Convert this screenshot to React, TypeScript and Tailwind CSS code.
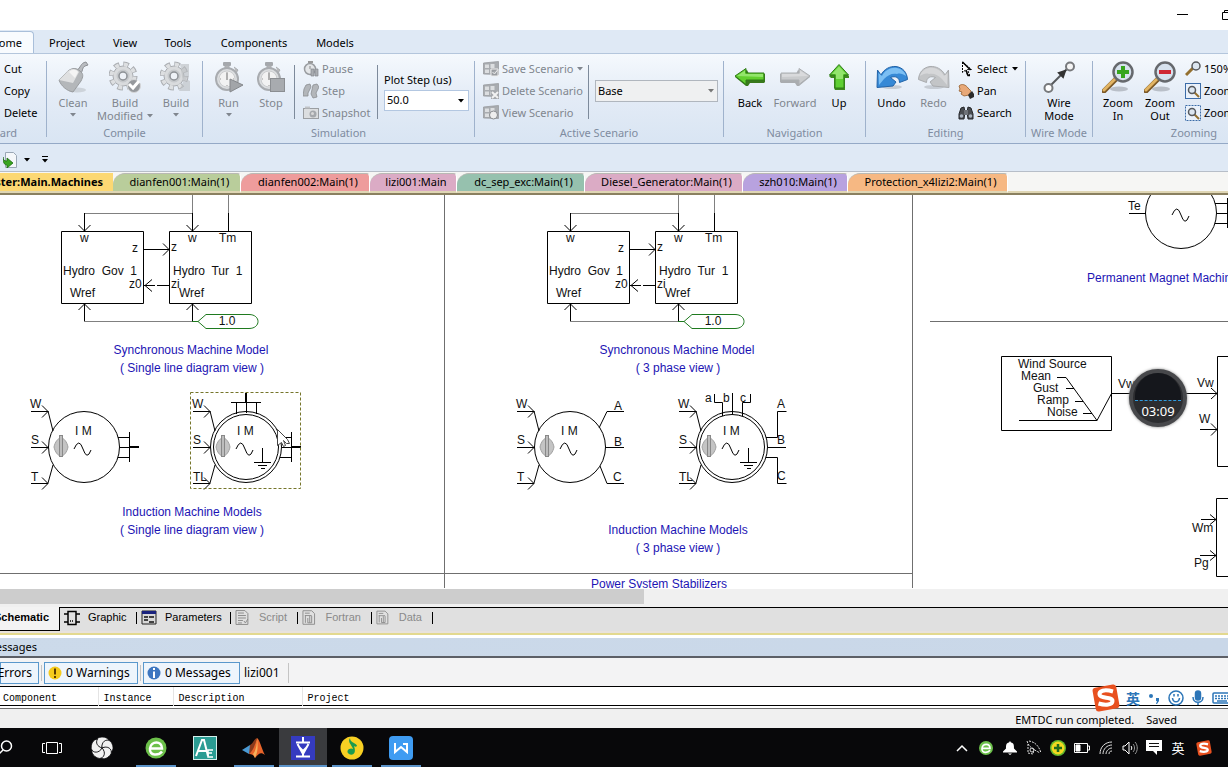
import { ReactNode, useState } from "react";

interface DocTab {
  label: string;
  className: string;
}

const docTabs: DocTab[] = [
  { label: "dianfen001:Main(1)", className: "w-[128px] bg-[#b9cd9b]" },
  { label: "dianfen002:Main(1)", className: "w-[129px] bg-[#ee9c9c]" },
  { label: "lizi001:Main", className: "w-[87px] bg-[#dbabc5]" },
  { label: "dc_sep_exc:Main(1)", className: "w-[128px] bg-[#96c1ae]" },
  { label: "Diesel_Generator:Main(1)", className: "w-[158px] bg-[#dbabc5]" },
  { label: "szh010:Main(1)", className: "w-[105px] bg-[#b8a2df]" },
  { label: "Protection_x4lizi2:Main(1)", className: "w-[160px] bg-[#f6b883]" },
];

/* ---------- ribbon building blocks ---------- */

function Caret({ className = "" }: { className?: string }) {
  return (
    <svg width="6" height="4" viewBox="0 0 6 4" className={className} fill="currentColor">
      <path d="M0 0h6L3 3.5z" />
    </svg>
  );
}

function Group({ title, className, children }: { title: string; className: string; children: ReactNode }) {
  return (
    <section className={`flex shrink-0 flex-col ${className}`}>
      <div className="flex h-[71px] pt-1">{children}</div>
      <div className="text-center leading-4 whitespace-nowrap text-[#7f8ca0]">{title}</div>
    </section>
  );
}

function Divider() {
  return <div className="mt-[7px] h-[76px] w-px shrink-0 bg-[#9fb2cc]" />;
}

function InnerDivider() {
  return <div className="mt-[7px] h-[54px] w-px shrink-0 bg-[#7d8a9b]" />;
}

interface BigButtonProps {
  icon: ReactNode;
  lines: string[];
  caret?: "below" | "inline";
  disabled?: boolean;
  className: string;
}

function BigButton({ icon, lines, caret, disabled, className }: BigButtonProps) {
  return (
    <button
      type="button"
      disabled={disabled}
      className={`flex shrink-0 flex-col items-center pt-[3px] whitespace-nowrap leading-[13px] ${disabled ? "text-[#80868e]" : "text-black"} ${className}`}
    >
      <span className="mb-[3px] flex h-8 items-center">{icon}</span>
      {lines.map((line, i) => (
        <span key={line} className="flex items-center gap-1">
          {line}
          {caret === "inline" && i === lines.length - 1 && <Caret />}
        </span>
      ))}
      {caret === "below" && <Caret className="mt-1" />}
    </button>
  );
}

function SmallButton({ icon, label, caret, disabled }: { icon: ReactNode; label: string; caret?: boolean; disabled?: boolean }) {
  return (
    <button
      type="button"
      disabled={disabled}
      className={`flex h-[22px] shrink-0 items-center gap-[3px] whitespace-nowrap ${disabled ? "text-[#80868e]" : "text-black"}`}
    >
      {icon}
      {label}
      {caret && <Caret className="ml-px" />}
    </button>
  );
}

/* ---------- ribbon icons ---------- */

function CleanIcon() {
  return (
    <svg width="32" height="32" viewBox="0 0 32 32">
      <ellipse cx="20" cy="29" rx="9" ry="2.500" fill="#cdd3da" />
      <path d="M20 9c4-2 3-7 9-8l2 3-3 1c-3 1-2 5-4 7z" fill="#b9bcc0" stroke="#8d9095" />
      <path d="M9 12c4-5 10-6 14-2 4 3 3 6 1 10l-8 11C10 30 4 25 2 19z" fill="#b4b7ba" stroke="#999c9f" />
      <path d="M9 12c4-5 10-5 13-1l-6 11L2 19z" fill="#dfe0e1" />
      <path d="M12 11c3-3 7-3 9 0l-3 6z" fill="#f4f4f4" />
    </svg>
  );
}

function GearIcon({ check }: { check?: boolean }) {
  return (
    <svg width="32" height="32" viewBox="0 0 32 32">
      <circle cx="14" cy="15" r="11.500" fill="none" stroke="#a9acb0" strokeWidth="6" strokeDasharray="5.200 3.830" />
      <circle cx="14" cy="15" r="10" fill="#d9dbdd" stroke="#a9acb0" />
      <circle cx="14" cy="15" r="11.500" fill="none" stroke="#dddfe1" strokeWidth="4" strokeDasharray="3.800 5.230" strokeDashoffset="-0.700" />
      <circle cx="14" cy="15" r="6.500" fill="#c6c9cc" />
      <circle cx="14" cy="15" r="4" fill="#eef2f7" stroke="#8d9196" strokeWidth="1.500" />
      {check ? (
        <g>
          <circle cx="25" cy="25" r="6.500" fill="#96999d" stroke="#d5d7d9" />
          <path d="M20 23l4 4 6-7" fill="none" stroke="#fff" strokeWidth="3" />
        </g>
      ) : (
        <path d="M20 3h9v12l-3 3 4 2v10H19l4-9z" fill="#b9bcc0" opacity=".6" />
      )}
    </svg>
  );
}

function StopwatchIcon({ mode }: { mode: "run" | "stop" }) {
  return (
    <svg width="30" height="32" viewBox="0 0 30 32">
      <rect x="9" y="1" width="8" height="4" rx="1" fill="#a5a8ac" />
      <path d="M11 5h4v3h-4zM20 6l4 3-2 3" fill="#bbb" stroke="#a9acb0" />
      <circle cx="13" cy="18" r="11" fill="#dcdee0" stroke="#a9acb0" strokeWidth="2" />
      <circle cx="13" cy="18" r="8" fill="#f2f2f2" stroke="#cbcdcf" />
      <path d="M13 12v7" stroke="#999" strokeWidth="1.500" />
      <path d="M13 11v1M13 24v1M6 18h1M19 18h1" stroke="#999" />
      {mode === "run" ? (
        <path d="M16 18l13 6-13 7z" fill="#a2a5a9" stroke="#85888c" />
      ) : (
        <rect x="14.500" y="17.500" width="14" height="13" fill="#a8abaf" stroke="#8b8e92" />
      )}
    </svg>
  );
}

function PauseIcon() {
  return (
    <svg width="16" height="16" viewBox="0 0 16 16">
      <rect x="5" y="0" width="5" height="2" fill="#999" />
      <circle cx="7" cy="8" r="5.500" fill="#e4e6e8" stroke="#9a9da1" strokeWidth="1.500" />
      <path d="M7 5v3" stroke="#888" />
      <path d="M8 8h3v7H8zM12 8h3v7h-3z" fill="#aaadb1" stroke="#85888c" strokeWidth=".7" />
    </svg>
  );
}

function StepIcon() {
  return (
    <svg width="16" height="16" viewBox="0 0 16 16" fill="#b3b6ba" stroke="#8a8d91" strokeWidth=".8">
      <path d="M3 2l4-1 1 3-3 6v3H0l1-7z" />
      <path d="M10 2l4-1 2 3-3 6 1 4-4 1-2-4z" />
    </svg>
  );
}

function SnapshotIcon() {
  return (
    <svg width="16" height="16" viewBox="0 0 16 16">
      <rect x=".5" y="3.500" width="15" height="10" fill="#dcdee0" stroke="#9b9ea2" />
      <path d="M2 1.500h5v2H2z" fill="#c0c3c6" />
      <circle cx="10" cy="9" r="3.500" fill="#a5a8ac" />
      <circle cx="9.500" cy="8.500" r="1.500" fill="#d8d8d8" />
    </svg>
  );
}

function ScenarioIcon({ kind }: { kind: "save" | "delete" | "view" }) {
  return (
    <svg width="16" height="16" viewBox="0 0 16 16">
      <path d="M.5 2l15-1.500v13l-15-.5z" fill="#a9acb0" stroke="#999ca0" strokeWidth=".8" />
      <path d="M2 3.500h4v3.500H2zM7.500 3h4v4h-4zM2 8.500h4V12H2zM7.500 8.500h2V12h-2z" fill="#dcdee0" />
      {kind === "save" && <path d="M8 8h7v7H8zM9.500 11l2 2 3-4" fill="#9a9da1" stroke="#eee" />}
      {kind === "delete" && (
        <g>
          <path d="M8 8h8v8H8z" fill="#a5a8ac" />
          <path d="M9 9l6 6M15 9l-6 6" stroke="#f2f2f2" strokeWidth="2" />
        </g>
      )}
      {kind === "view" && <circle cx="10.500" cy="10" r="4" fill="#eee" stroke="#898c90" />}
    </svg>
  );
}

function ArrowIcon({ kind }: { kind: "back" | "forward" | "up" }) {
  if (kind === "up") {
    return (
      <svg width="22" height="28" viewBox="0 0 22 28">
        <path d="M1 13L11 3l10 10v2h-4v12H7l-1-2V15H3z" fill="#3f8a1f" />
        <path d="M11 1.500L20.500 12H16v13H7V12H1.500z" fill="#5fcf33" stroke="#2f7a17" />
        <path d="M11 3.500L18 11h-3v5H8v-5H4z" fill="#93e56c" />
      </svg>
    );
  }
  const back = kind === "back";
  return (
    <svg width="32" height="20" viewBox="0 0 32 20" className={back ? "" : "-scale-x-100"}>
      <path d="M1 10l12-7 2 4h16v8l-1 1H16l-2 3h-2z" fill={back ? "#39791c" : "#a9acaf"} />
      <path
        d="M1 9l11-7.500V6h18v7H12v4.500z"
        fill={back ? "#62cf2f" : "#c9cbcd"}
        stroke={back ? "#2f7a17" : "#acafb2"}
      />
      <path d="M3 9l8-5.500V7h18v3z" fill={back ? "#93e56c" : "#d9dadc"} />
    </svg>
  );
}

function UndoIcon({ redo }: { redo?: boolean }) {
  return (
    <svg width="34" height="26" viewBox="0 0 34 26" className={redo ? "-scale-x-100" : ""}>
      <ellipse cx="17" cy="23" rx="10" ry="2" fill="#c6ccd4" />
      <path
        d="M2.500 6l3.500 5C9 5 15 2 21 2.500c7 1 11 6 11.500 13l-8 3c0-5-4-7-9-5L21 18l-3 4-16 1.500z"
        fill={redo ? "#c3c5c7" : "#3689d6"}
        stroke={redo ? "#a9abae" : "#2364a8"}
      />
      <path d="M7 12c3-6 9-9 15-8 5 1 8 4 9 8-3-2-6-3-9-2-5-1-9 1-13 5L4 21 3.500 9z" fill={redo ? "#d6d7d9" : "#7cbff3"} />
    </svg>
  );
}

function SelectIcon() {
  return (
    <svg width="16" height="16" viewBox="0 0 16 16">
      <path d="M4.500 1v10.500l3-2.500 2 5h2l-2-5.500h4z" fill="#fff" stroke="#000" strokeDasharray="2 1" />
      <path d="M4.500 1l8 8M8 9l2 5.500h2" fill="none" stroke="#000" strokeWidth="1.500" />
    </svg>
  );
}

function PanIcon() {
  return (
    <svg width="16" height="16" viewBox="0 0 16 16">
      <path d="M1 3c3-3 7-1 9 2l3 3-2 4-5 1-3-2 1-2-3-1 1-2z" fill="#e8a878" stroke="#96602f" strokeWidth=".8" />
      <path d="M10 12l4-4 2 3v3l-4 2z" fill="#2a2a2a" />
    </svg>
  );
}

function SearchIcon() {
  return (
    <svg width="16" height="16" viewBox="0 0 16 16">
      <path d="M3 3l3-1 1 5-1 7H1V9zM13 3l-3-1-1 5 1 7h5V9z" fill="#4a4d52" stroke="#25272a" />
      <path d="M6 5h4v5H6z" fill="#6e7278" />
      <circle cx="3.500" cy="11" r="1.800" fill="#a9b3bf" />
      <circle cx="12.500" cy="11" r="1.800" fill="#a9b3bf" />
    </svg>
  );
}

function WireIcon() {
  return (
    <svg width="32" height="32" viewBox="0 0 32 32">
      <path d="M8 24L25 7" stroke="#55585c" strokeWidth="2" />
      <path d="M22 10l-6 2 4 4z" fill="#333" stroke="#333" strokeWidth="2" />
      <circle cx="5.500" cy="27" r="4" fill="#fff" stroke="#77797c" strokeWidth="2" />
      <circle cx="27" cy="5.500" r="4" fill="#f5f5f5" stroke="#77797c" strokeWidth="2" />
    </svg>
  );
}

function MagnifierIcon({ plus }: { plus?: boolean }) {
  return (
    <svg width="32" height="32" viewBox="0 0 32 32">
      <ellipse cx="17" cy="28" rx="9" ry="2.500" fill="#b9bfc8" />
      <path d="M2 30L14 18" stroke="#7c5826" strokeWidth="5" strokeLinecap="round" />
      <path d="M2 29L13 18" stroke="#e2b463" strokeWidth="3" strokeLinecap="round" />
      <circle cx="21" cy="11" r="9.500" fill="#d7e2ee" stroke="#66696d" strokeWidth="2.500" />
      {plus ? (
        <path d="M21 5v12M15 11h12" stroke="#36a51e" strokeWidth="4" />
      ) : (
        <path d="M15 11h12" stroke="#cf2733" strokeWidth="4" />
      )}
    </svg>
  );
}

function SmallMagnifierIcon({ frame }: { frame?: "solid" | "dashed" }) {
  return (
    <svg width="16" height="16" viewBox="0 0 16 16">
      {frame && (
        <rect x=".5" y=".5" width="15" height="15" fill="#eaf1fa" stroke="#3c6ca8" strokeDasharray={frame === "dashed" ? "2 1" : undefined} />
      )}
      {frame ? (
        <g>
          <path d="M9.500 9.500l4.500 4.500" stroke="#94702f" strokeWidth="2" />
          <circle cx="7" cy="7" r="3.500" fill="#dce6f0" stroke="#55585c" strokeWidth="1.500" />
        </g>
      ) : (
        <g>
          <path d="M1 14l7-7" stroke="#94702f" strokeWidth="3" />
          <circle cx="11" cy="5" r="4" fill="#dce6f0" stroke="#55585c" strokeWidth="1.500" />
        </g>
      )}
    </svg>
  );
}

function Ribbon() {
  return (
    <div className="flex h-[91px] shrink-0 overflow-hidden border-y border-t-[#b4c6dc] border-b-[#94a9c6] bg-linear-to-b from-[#f5f9fd] via-[#e3ebf6] to-[#d9e5f3]">
      <section className="flex w-[46px] shrink-0 flex-col">
        <div className="flex h-[71px] flex-col items-start pt-1 pl-1">
          <button type="button" className="h-[22px] shrink-0">Cut</button>
          <button type="button" className="h-[22px] shrink-0">Copy</button>
          <button type="button" className="h-[22px] shrink-0">Delete</button>
        </div>
        <div className="flex w-[17px] justify-end leading-4 text-[#7f8ca0]">Clipboard</div>
      </section>
      <Divider />

      <Group title="Compile" className="w-[155px]">
        <BigButton icon={<CleanIcon />} lines={["Clean"]} caret="below" disabled className="ml-px w-[50px]" />
        <BigButton icon={<GearIcon check />} lines={["Build", "Modified"]} caret="inline" disabled className="w-[54px]" />
        <BigButton icon={<GearIcon />} lines={["Build"]} caret="below" disabled className="w-[48px]" />
      </Group>
      <Divider />

      <Group title="Simulation" className="w-[271px]">
        <BigButton icon={<StopwatchIcon mode="run" />} lines={["Run"]} caret="below" disabled className="ml-1 w-[43px]" />
        <BigButton icon={<StopwatchIcon mode="stop" />} lines={["Stop"]} disabled className="mr-[2px] w-[42px]" />
        <InnerDivider />
        <div className="flex w-[82px] shrink-0 flex-col items-start pl-2">
          <SmallButton icon={<PauseIcon />} label="Pause" disabled />
          <SmallButton icon={<StepIcon />} label="Step" disabled />
          <SmallButton icon={<SnapshotIcon />} label="Snapshot" disabled />
        </div>
        <InnerDivider />
        <div className="flex flex-col pt-3 pl-1.5">
          <label htmlFor="plot-step" className="leading-5 whitespace-nowrap">Plot Step (us)</label>
          <div className="flex h-[21px] w-[85px] items-center border border-[#b3c7e1] bg-white pr-1 pl-0.5">
            <input id="plot-step" defaultValue="50.0" className="w-full min-w-0 outline-none" />
            <Caret className="shrink-0" />
          </div>
        </div>
      </Group>
      <Divider />

      <Group title="Active Scenario" className="w-[248px]">
        <div className="flex w-[113px] shrink-0 flex-col items-start pl-2">
          <SmallButton icon={<ScenarioIcon kind="save" />} label="Save Scenario" caret disabled />
          <SmallButton icon={<ScenarioIcon kind="delete" />} label="Delete Scenario" disabled />
          <SmallButton icon={<ScenarioIcon kind="view" />} label="View Scenario" disabled />
        </div>
        <InnerDivider />
        <div className="relative mt-[22px] ml-1.5 h-[22px] w-[123px]">
          <select aria-label="Active scenario" className="h-full w-full appearance-none border border-[#b0b6be] bg-[#eff0f1] pl-0.5">
            <option>Base</option>
          </select>
          <Caret className="pointer-events-none absolute top-[9px] right-1 text-[#777]" />
        </div>
      </Group>
      <Divider />

      <Group title="Navigation" className="w-[141px]">
        <BigButton icon={<ArrowIcon kind="back" />} lines={["Back"]} className="ml-1 w-[44px]" />
        <BigButton icon={<ArrowIcon kind="forward" />} lines={["Forward"]} disabled className="w-[46px]" />
        <BigButton icon={<ArrowIcon kind="up" />} lines={["Up"]} className="w-[42px]" />
      </Group>
      <Divider />

      <Group title="Editing" className="w-[159px]">
        <BigButton icon={<UndoIcon />} lines={["Undo"]} className="ml-1 w-[43px]" />
        <BigButton icon={<UndoIcon redo />} lines={["Redo"]} disabled className="w-[41px]" />
        <div className="flex flex-col items-start pl-1">
          <SmallButton icon={<SelectIcon />} label="Select" caret />
          <SmallButton icon={<PanIcon />} label="Pan" />
          <SmallButton icon={<SearchIcon />} label="Search" />
        </div>
      </Group>
      <Divider />

      <Group title="Wire Mode" className="w-[66px]">
        <BigButton icon={<WireIcon />} lines={["Wire", "Mode"]} className="w-full" />
      </Group>
      <Divider />

      <Group title="Zooming" className="w-[202px]">
        <BigButton icon={<MagnifierIcon plus />} lines={["Zoom", "In"]} className="ml-1 w-[42px]" />
        <BigButton icon={<MagnifierIcon />} lines={["Zoom", "Out"]} className="w-[42px]" />
        <div className="flex flex-col items-start pl-1">
          <SmallButton icon={<SmallMagnifierIcon />} label="150%" caret />
          <SmallButton icon={<SmallMagnifierIcon frame="solid" />} label="Zoom Extent" />
          <SmallButton icon={<SmallMagnifierIcon frame="dashed" />} label="Zoom Rectangle" />
        </div>
      </Group>
    </div>
  );
}

/* ---------- schematic ---------- */

function HydroModel({ x, view }: { x: number; view: string }) {
  return (
    <g transform={`translate(${x} 0)`}>
      <g fill="none" stroke="#808080">
        <path d="M192.500 195v18M228.500 195v18M84 213.500h108M84 321.500h108" />
      </g>
      <g fill="none" stroke="#000">
        <path d="M84.500 213v18m-6-6l6 6 6-6M192.500 213v18m-6-6l6 6 6-6M228.500 213v18" />
        <path d="M61.500 231.500h82v72h-82zM169.500 231.500h82v72h-82z" />
        <path d="M144 249.500h26m-7-6l6 6-6 6M169 285.500h-12M155 285.500h-11m8-6l-7 6 7 6" />
        <path d="M84.500 321v-17m-6 6l6-6 6 6M192.500 321v-17m-6 6l6-6 6 6" />
      </g>
      <path d="M192 321.500h6l8-7h43c12 0 12 14 0 14h-43l-8-7" fill="none" stroke="#1f7a1f" />
      <text x="80" y="242">w</text>
      <text x="132" y="252">z</text>
      <text x="63" y="275">{"Hydro\u00a0 Gov\u00a0 1"}</text>
      <text x="129" y="288">z0</text>
      <text x="70" y="297">Wref</text>
      <text x="188" y="242">w</text>
      <text x="219" y="242">Tm</text>
      <text x="171" y="251">z</text>
      <text x="173" y="275">{"Hydro\u00a0 Tur\u00a0 1"}</text>
      <text x="171" y="288">zi</text>
      <text x="179" y="297">Wref</text>
      <text x="227" y="325" textAnchor="middle">1.0</text>
      <g fill="#1c14b4" textAnchor="middle">
        <text x="191" y="354">Synchronous Machine Model</text>
        <text x="192" y="372">{view}</text>
      </g>
    </g>
  );
}

function Sine({ x, y }: { x: number; y: number }) {
  return <path d={`M${x - 9} ${y + 2}q5-12 9 0t8 1`} fill="none" stroke="#000" />;
}

function Machine({ x, torque, wound }: { x: number; torque: string; wound?: boolean }) {
  return (
    <g transform={`translate(${x} 447)`}>
      <g fill="none" stroke="#000">
        <circle r="35.500" />
        {wound && <circle r="32.500" />}
        <path d="M-53-35.500h17m-6-6l6 6-6 6M-36-36l5 20" />
        <path d="M-53 .5h17m-6-6l6 6-6 6" />
        <path d="M-53 36.500h17m-6-6l6 6-6 6M-36 36l5-18" />
        {wound && <path d="M16.500 1v14M8 15.500h17M12 18.500h9M15 21.500h4" />}
      </g>
      <path d="M-30 0c1-5 4-9 7-9s6 4 7 9c-1 5-4 9-7 9s-6-4-7-9z" fill="#c4c4c4" stroke="#a0a0a0" />
      <rect x="-24.500" y="-11.500" width="3" height="21" fill="#bdbdbd" stroke="#888" />
      <text x="-54" y="-39">W</text>
      <text x="-53" y="-3">S</text>
      <text x="-53" y="34">{torque}</text>
      <text x="-9" y="-12">I M</text>
      <Sine x={-1} y={0} />
    </g>
  );
}

function Schematic() {
  return (
    <svg width="1240" height="393" viewBox="0 195 1240 393" className="block font-['Liberation_Sans',sans-serif] text-xs" fill="#111">
      <path d="M444.500 195v393M912.500 195v393M0 573.500h912M930 321.500h310" stroke="#6f6f6f" />

      <HydroModel x={0} view="( Single line diagram view )" />
      <HydroModel x={486} view="( 3 phase view )" />

      <Machine x={84} torque="T" />
      <Machine x={246} torque="TL" wound />
      <Machine x={570} torque="T" />
      <Machine x={732} torque="TL" wound />

      {/* single line terminals */}
      <g fill="none" stroke="#000">
        <path d="M118 437.500h11M118 457.500h11M120 447.500h9M129.500 432v30" />
        <path d="M280 437.500h11M280 457.500h11M282 447.500h9M291.500 432v30" />
        <path d="M231 402.500h30M236.500 402v12M256.500 402v12M246.500 402v11" />
        <path d="M129 447h10M291 447h10M246 393v10" strokeWidth="2" />
      </g>
      <rect x="190.500" y="392.500" width="110" height="96" fill="none" stroke="#75752a" strokeDasharray="3 2" />
      <path d="M277.500 429.500v16l4-3 2 4 2-1-2-5 3 3h3l-2-4z" fill="#fff" stroke="#444" />

      {/* three phase terminals */}
      <g fill="none" stroke="#000">
        <path d="M599 428l8-16.500h17M606 447.500h18M600 466l7 17.500h17" />
        <path d="M714.500 394v8.500h8V416M732.500 393v21M750.500 394v8.500h-8V416" />
        <path d="M766 437.500h11.500v-26h9M768 447.500h18M766 457.500h11.500v26h9" />
      </g>
      <g>
        <text x="614" y="410">A</text>
        <text x="614" y="446">B</text>
        <text x="613" y="481">C</text>
        <text x="705" y="402">a</text>
        <text x="723" y="402">b</text>
        <text x="740" y="402">c</text>
        <text x="777" y="408">A</text>
        <text x="777" y="444">B</text>
        <text x="777" y="480">C</text>
      </g>

      <g fill="#1c14b4" textAnchor="middle">
        <text x="192" y="516">Induction Machine Models</text>
        <text x="192" y="534">( Single line diagram view )</text>
        <text x="678" y="534">Induction Machine Models</text>
        <text x="678" y="552">( 3 phase view )</text>
        <text x="659" y="588">Power System Stabilizers</text>
      </g>

      {/* permanent magnet machine */}
      <g fill="none" stroke="#000">
        <circle cx="1181" cy="213" r="35.500" />
        <path d="M1129 213.500h17M1215 203.500h12M1217 213.500h10M1215 223.500h12" />
        <path d="M1228 198v30" strokeWidth="2" />
      </g>
      <Sine x={1181} y={213} />
      <text x="1128" y="210">Te</text>
      <text x="1087" y="282" fill="#1c14b4">Permanent Magnet Machine</text>

      {/* wind source and turbine */}
      <g fill="none" stroke="#000">
        <path d="M1001.500 356.500h110v74h-110z" />
        <path d="M1057 377.500h9l31 43 14.500-27H1217M1066 388.500h8M1075 401.500h8M1083 413.500h9M1019 420.500h78" />
        <path d="M1211 388l6 5.500-6 5.500M1200 429.500h17m-6-6l6 6-6 6" />
        <path d="M1217.500 356.500h40v110h-40zM1216.500 498.500h40v78h-40z" />
        <path d="M1201 519.500h15m-6-5l6 5-6 5M1200 555.500h16m-6-5l6 5-6 5" />
      </g>
      <text x="1018" y="368">Wind Source</text>
      <text x="1021" y="380">Mean</text>
      <text x="1033" y="392">Gust</text>
      <text x="1037" y="404">Ramp</text>
      <text x="1047" y="416">Noise</text>
      <text x="1118" y="388">Vw</text>
      <text x="1197" y="387">Vw</text>
      <text x="1199" y="423">W</text>
      <text x="1192" y="532">Wm</text>
      <text x="1194" y="567">Pg</text>
    </svg>
  );
}

function RecordTimer() {
  return (
    <div className="absolute top-[174px] left-[1129px] flex size-[58px] flex-col items-center rounded-full border-4 border-[#47484b] bg-[#2c2d30] shadow-[0_0_3px_#777]">
      <div className="h-[27px] w-[46px] rounded-t-full bg-[#15171c]" />
      <div className="w-[46px] border-b border-dashed border-[#2f9be0]" />
      <span className="text-[13px] leading-5 text-white">03:09</span>
    </div>
  );
}

/* ---------- bottom panes ---------- */

type SheetKind = "graphic" | "parameters" | "text" | "chart";

function SheetIcon({ kind }: { kind: SheetKind }) {
  if (kind === "graphic") {
    return (
      <svg width="16" height="16" viewBox="0 0 16 16" fill="none" stroke="#000" strokeWidth="1.500">
        <path d="M4 1.500h8v13H4zM0 4h4M0 12h4M12 4h4M12 12h4" />
        <path d="M6 11h4" strokeDasharray="1 1" />
      </svg>
    );
  }
  if (kind === "parameters") {
    return (
      <svg width="16" height="16" viewBox="0 0 16 16">
        <path d="M1 1h14v13H1z" fill="#d8d8d8" stroke="#222" />
        <path d="M1 1h14v3H1z" fill="#1a237e" />
        <path d="M3 7h4M3 10h4M8 7h5M8 12h5" stroke="#111" strokeWidth="1.500" />
      </svg>
    );
  }
  return (
    <svg width="14" height="15" viewBox="0 0 14 15" fill="none" stroke="#8d8d8d">
      <path d="M1 .5h9l3 3v11H1z" />
      {kind === "text" ? <path d="M3 3h6M3 5.500h8M3 8h8M3 10.500h5M3 13h4M9 11l1.500 2L13 9" /> : <path d="M3 3h5M3.500 5v8M6 8v5h4V6M8 6v7M3 5.500h7" />}
    </svg>
  );
}

function SheetTab({ kind, label, className, disabled }: { kind: SheetKind; label: string; className: string; disabled?: boolean }) {
  return (
    <button type="button" disabled={disabled} className={`flex shrink-0 items-center pb-1 pl-1 ${disabled ? "text-[#8a8a8a]" : "text-black"} ${className}`}>
      <SheetIcon kind={kind} />
      {label}
      <span className="ml-auto h-3 w-px shrink-0 bg-black" />
    </button>
  );
}

function SheetTabs() {
  return (
    <div className="flex h-6 shrink-0 items-stretch border-t border-black bg-[#e0e0e0] font-['Liberation_Sans',sans-serif] text-[11px]">
      <button type="button" className="-mt-px flex w-[60px] shrink-0 items-center justify-end border-r border-b border-black bg-[#f3f3f3] pr-2.5 pb-0.5 font-bold">
        Schematic
      </button>
      <SheetTab kind="graphic" label="Graphic" className="w-[77px] gap-2" />
      <SheetTab kind="parameters" label="Parameters" className="w-[94px] gap-2" />
      <SheetTab kind="text" label="Script" className="w-[67px] gap-2.5" disabled />
      <SheetTab kind="chart" label="Fortran" className="w-[74px] gap-2.5" disabled />
      <SheetTab kind="chart" label="Data" className="w-[61px] gap-2.5" disabled />
    </div>
  );
}

function Messages() {
  return (
    <div className="shrink-0">
      <div className="flex h-[18px] items-center bg-linear-to-r from-[#ccdaea] to-[#c9d7e8]">
        <h2 className="flex w-[37px] justify-end">Messages</h2>
      </div>
      <div className="flex h-[31px] items-center border-t-2 border-b border-t-[#5c5f66] border-b-black bg-[#f3f3f4] pt-0.5 text-xs">
        <button type="button" className="flex h-[22px] w-[39px] shrink-0 items-center justify-end border border-[#5a98cc] bg-[#eef5fc] pr-1.5 whitespace-nowrap">
          0 Errors
        </button>
        <span className="mx-[2px] h-4 w-px bg-[#c4c4c4]" />
        <button type="button" className="flex h-[22px] w-[94px] items-center gap-1 border border-[#5a98cc] bg-[#eef5fc] pl-[3px] whitespace-nowrap">
          <svg width="14" height="14" viewBox="0 0 14 14">
            <circle cx="7" cy="7" r="6.500" fill="#f6cb1c" />
            <path d="M7 2.500v6M7 10v2" stroke="#5b3c00" strokeWidth="2" />
          </svg>
          0 Warnings
        </button>
        <span className="mx-[2px] h-4 w-px bg-[#c4c4c4]" />
        <button type="button" className="flex h-[22px] w-[97px] items-center gap-1 border border-[#5a98cc] bg-[#eef5fc] pl-[3px] whitespace-nowrap">
          <svg width="14" height="14" viewBox="0 0 14 14">
            <circle cx="7" cy="7" r="6.500" fill="#3d76c0" />
            <path d="M7 2v2M7 5.500V12" stroke="#fff" strokeWidth="2" />
          </svg>
          0 Messages
        </button>
        <span className="flex h-5 items-center border-r border-[#c4c4c4] pr-2 pl-1">lizi001</span>
      </div>
      <table className="h-[19px] w-full table-fixed border-b border-black bg-white font-['Liberation_Mono',monospace] text-[10px] leading-3">
        <thead>
          <tr className="text-left align-bottom">
            <th className="w-[98px] border-r border-[#e4e4e4] pl-[3px] font-normal">Component</th>
            <th className="w-[75px] border-r border-[#e4e4e4] pl-[5px] font-normal">Instance</th>
            <th className="w-[129px] border-r border-[#e4e4e4] pl-[5px] font-normal">Description</th>
            <th className="pl-[5px] font-normal">Project</th>
          </tr>
        </thead>
      </table>
      <div className="mt-0.5 h-px bg-[#6d6d6d]" />
    </div>
  );
}

function SogouLogo({ className }: { className: string }) {
  return (
    <svg viewBox="0 0 28 28" className={className}>
      <rect x="2" y="2" width="24" height="24" rx="3" fill="#e8501f" transform="rotate(-10 14 14)" />
      <path d="M21 7.500C12 5 7 7 7.500 10.500c.5 4.500 13 2 13 6.500 0 4-7 4.500-14 2.500" fill="none" stroke="#fff" strokeWidth="4" />
    </svg>
  );
}

function InputMethodBar() {
  return (
    <div className="absolute -top-11 right-0 flex h-7 w-[136px] items-center gap-2 overflow-hidden text-[#2d76b8]">
      <SogouLogo className="size-7 shrink-0" />
      <span className="-ml-0.5 shrink-0 font-['Noto_Sans_CJK_SC',sans-serif] text-sm font-bold">英</span>
      <svg width="12" height="12" viewBox="0 0 12 12" className="shrink-0" fill="currentColor">
        <circle cx="3" cy="4" r="2" />
        <path d="M8 6h3v3l-2 3H8l1-3H8z" />
      </svg>
      <svg width="16" height="16" viewBox="0 0 16 16" className="shrink-0" fill="none" stroke="currentColor" strokeWidth="1.500">
        <circle cx="8" cy="8" r="7" />
        <path d="M4.500 8c.5 5 6.500 5 7 0M6 4v2.500M10 4v2.500" />
      </svg>
      <svg width="12" height="16" viewBox="0 0 12 16" className="shrink-0" fill="none" stroke="currentColor" strokeWidth="1.500">
        <rect x="3.500" y="1" width="5" height="9" rx="2.500" fill="currentColor" />
        <path d="M1 7c0 7 10 7 10 0M6 12v3" />
      </svg>
      <svg width="20" height="12" viewBox="0 0 20 12" className="shrink-0" fill="none" stroke="currentColor" strokeWidth="1.500">
        <rect x="1" y="1" width="18" height="10" rx="1" />
        <path d="M3 4h14M3 6.500h14" strokeDasharray="2 1" />
        <path d="M5 9h10" />
      </svg>
    </div>
  );
}

/* ---------- taskbar ---------- */

function TaskButton({ label, running, active, children }: { label: string; running?: boolean; active?: boolean; children: ReactNode }) {
  return (
    <button type="button" aria-label={label} className={`flex h-full w-12 shrink-0 flex-col items-center justify-between ${active ? "bg-[#3a3b3e]" : ""}`}>
      <span className="flex h-9 items-center pt-1">{children}</span>
      <span className={`h-0.5 ${active ? "w-full" : "w-10"} ${running ? "bg-[#5b93c9]" : ""}`} />
    </button>
  );
}

function GreenE({ className }: { className: string }) {
  return (
    <svg viewBox="0 0 24 24" className={className}>
      <circle cx="12" cy="12" r="10.500" fill="#6cc04a" />
      <path d="M6 12.500h12c0-8-11-8-12 0s9 7 12 3" fill="none" stroke="#fff" strokeWidth="2.500" />
    </svg>
  );
}

function Taskbar() {
  return (
    <footer className="flex h-[39px] items-stretch overflow-hidden bg-[#08080a] text-white">
      <button type="button" aria-label="Search" className="flex w-7 shrink-0 items-center">
        <svg width="13" height="16" viewBox="0 0 13 16" fill="none" stroke="#fff" strokeWidth="1.500">
          <circle cx="6.500" cy="6" r="5" />
          <path d="M3 10l-4 4" />
        </svg>
      </button>
      <div className="mr-1.5 flex gap-0.5">
        <TaskButton label="Task view">
          <svg width="20" height="14" viewBox="0 0 20 14" fill="none" stroke="#fff">
            <path d="M4.500 1.500h11v11h-11zM3 2.500H.5v9H3M17 2.500h2.500v9H17" />
          </svg>
        </TaskButton>
        <TaskButton label="Fan">
          <svg width="22" height="22" viewBox="0 0 22 22">
            {[0, 72, 144, 216, 288].map((a) => (
              <path key={a} d="M11 11C5 10 3 4 7 1c4-2 10-1 11 3-4-1-7 2-7 7z" fill="#f1f1f1" stroke="#0a0a0c" strokeWidth=".8" transform={`rotate(${a} 11 11)`} />
            ))}
          </svg>
        </TaskButton>
      </div>
      <div className="flex gap-px">
        <TaskButton label="Browser" running>
          <GreenE className="size-6" />
        </TaskButton>
        <TaskButton label="AutoCAD Electrical">
          <svg width="24" height="24" viewBox="0 0 24 24">
            <rect x=".5" y=".5" width="23" height="23" fill="#2a9c93" stroke="#d6efec" />
            <path d="M3 20L9 4h2l4 16M5 15h8" fill="none" stroke="#fff" strokeWidth="2" />
            <path d="M20 14h-5v7h5M15 17h4" fill="none" stroke="#fff" strokeWidth="1.500" />
          </svg>
        </TaskButton>
        <TaskButton label="MATLAB" running>
          <svg width="24" height="20" viewBox="0 0 24 20">
            <path d="M0 12l8-5 4 4-5 5z" fill="#4a9ad4" />
            <path d="M8 7c3-1 4-6 7-7l-3 12-5 4z" fill="#8b3a1c" />
            <path d="M15 0c3 2 5 12 8 17-4-3-6-2-10 3-1-3-3-4-6-4 5-4 6-10 8-16z" fill="#e8642a" />
            <path d="M15 0c0 7-1 12-4 16l2 4c3-6 3-12 2-20z" fill="#f7b05a" />
          </svg>
        </TaskButton>
        <TaskButton label="PSCAD" running active>
          <svg width="24" height="24" viewBox="0 0 24 24">
            <rect width="24" height="24" fill="#353bc0" />
            <path d="M12 1v5M5 6.500h14M6.500 8L12 18l5.500-10M5 20.500h14M12 18v2M8.500 11.500L12 15l3.500-3.500" fill="none" stroke="#fff" strokeWidth="2" />
          </svg>
        </TaskButton>
        <TaskButton label="Music" running>
          <svg width="24" height="24" viewBox="0 0 24 24">
            <circle cx="12" cy="12" r="11.500" fill="#f8d023" />
            <path d="M10 2c0 5 7 5 7 8-1 1-2 1-3 0 3 8-2 10-5 8-4-3 1-7 4-5-1-4-6-7-3-11z" fill="#1d9b4f" />
          </svg>
        </TaskButton>
        <TaskButton label="WPS" running>
          <svg width="24" height="24" viewBox="0 0 24 24">
            <rect width="24" height="24" rx="4" fill="#3f9cf2" />
            <path d="M6 7v9l6-5 6 5V8h-4" fill="none" stroke="#fff" strokeWidth="2" />
          </svg>
        </TaskButton>
      </div>

      <div className="mr-[14px] ml-auto grid shrink-0 auto-cols-[24px] grid-flow-col place-items-center">
        <svg width="12" height="8" viewBox="0 0 12 8" fill="none" stroke="#fff" strokeWidth="1.500">
          <path d="M1 7l5-5 5 5" />
        </svg>
        <GreenE className="size-4" />
        <svg width="14" height="14" viewBox="0 0 14 14" fill="#fff">
          <path d="M7 0l1 1.500c3 .5 3 3 3 6l3 3v1H0v-1l3-3c0-3 0-5.500 3-6zM5 12.500h4L7 14z" />
        </svg>
        <svg width="16" height="16" viewBox="0 0 16 16" fill="none" stroke="#ddd">
          <path d="M1 1c2 7 8 9 13 12M3 1c6 1 10 5 12 12M2 4v9l5 1 1-5" strokeDasharray="2 1" />
          <circle cx="6" cy="10" r="2" />
        </svg>
        <svg width="16" height="16" viewBox="0 0 16 16">
          <circle cx="8" cy="8" r="8" fill="#62b82e" />
          <circle cx="8" cy="8" r="6.500" fill="#f3d91f" />
          <path d="M8 4v8M4 8h8" stroke="#1f6a1c" strokeWidth="2.500" />
        </svg>
        <svg width="16" height="10" viewBox="0 0 16 10" fill="none" stroke="#fff">
          <path d="M.5 .5h13v9H.5zM14 3h1.500v4H14" />
          <path d="M2 2h4v6H2z" fill="#fff" />
        </svg>
        <svg width="14" height="14" viewBox="0 0 14 14" fill="none" stroke="#ddd">
          <path d="M1 13C1 6 6 1 13 1M4 13c0-5 4-9 9-9M7 13c0-3 3-6 6-6M10 13c0-2 1-3 3-3" />
        </svg>
        <svg width="16" height="14" viewBox="0 0 16 14" fill="none" stroke="#fff">
          <path d="M1 5h2l4-4v12L3 9H1zM9 5c1 1 1 3 0 4" />
          <path d="M11 3c2 2 2 6 0 8M13 1c3 3 3 9 0 12" stroke="#999" />
        </svg>
        <svg width="16" height="15" viewBox="0 0 16 15">
          <path d="M0 0h16v11h-5v4l-4-4H0z" fill="#fff" />
          <path d="M3 3.500h10M3 6.500h10" stroke="#111" />
        </svg>
        <span className="font-['Noto_Sans_CJK_SC',sans-serif] text-[13px]">英</span>
        <SogouLogo className="ml-1 size-4" />
      </div>
    </footer>
  );
}

export default function App() {
  const [menu, setMenu] = useState("Home");
  const menus = [
    { name: "Project", className: "w-[66px]" },
    { name: "View", className: "w-[50px]" },
    { name: "Tools", className: "w-[56px]" },
    { name: "Components", className: "w-[96px]" },
    { name: "Models", className: "w-[66px]" },
  ];

  return (
    <div className="relative flex min-h-screen w-full flex-col overflow-hidden bg-white font-['Noto_Sans','Open_Sans',sans-serif] text-[11px] text-black">
      <header className="flex h-[30px] shrink-0 items-center justify-end gap-[34px]">
        <button type="button" aria-label="Minimize">
          <svg width="11" height="11" viewBox="0 0 11 11" stroke="#000"><path d="M0 4.500h11" /></svg>
        </button>
        <button type="button" aria-label="Restore" className="w-[6px] overflow-hidden">
          <svg width="11" height="11" viewBox="0 0 11 11" stroke="#000" fill="none"><path d="M.5 2.500h7v7h-7zM2.500 2V.5h8v7H8" /></svg>
        </button>
      </header>

      <nav className="flex h-[23px] shrink-0 items-stretch bg-[#dfe9f5]">
        <button
          type="button"
          onClick={() => setMenu("Home")}
          className="mt-px flex w-[34px] items-center justify-end rounded-tr-sm border-t border-r border-[#a9bfda] bg-[#f8fbfe] pt-0.5 pr-[11px]"
        >
          Home
        </button>
        {menus.map((m) => (
          <button key={m.name} type="button" aria-pressed={menu === m.name} onClick={() => setMenu(m.name)} className={`pt-1 text-center ${m.className}`}>
            {m.name}
          </button>
        ))}
      </nav>

      <Ribbon />

      <div className="flex h-7 shrink-0 items-center border-b border-[#b7bec8] bg-[#dfe9f5] pt-1 pl-[3px]">
        <svg width="15" height="16" viewBox="0 0 15 16">
          <path d="M2.500 .5h8l3 3v12h-11z" fill="#f4f7fa" stroke="#9aa7b5" />
          <path d="M0 5c0 3 1 4 4 4V6l6 5-6 5v-3C1 13 0 10 0 5z" fill="#38a51f" stroke="#1c6a10" strokeWidth=".8" />
        </svg>
        <Caret className="ml-1.5" />
        <svg width="6" height="7" viewBox="0 0 6 7" className="ml-3"><path d="M0 .5h6" stroke="#000" /><path d="M0 3h6L3 6.500z" /></svg>
      </div>

      <div className="flex h-[23px] shrink-0 items-stretch overflow-hidden border-b-2 border-[#8a8060] bg-[#f6f6f4] pt-px">
        <button type="button" className="flex w-[113px] shrink-0 items-center justify-end border-b-2 border-[#dfd6b4] bg-[#fcd873] pr-2.5 font-bold">
          Master:Main.Machines
        </button>
        {docTabs.map((tab) => (
          <button
            key={tab.label}
            type="button"
            className={`flex shrink-0 items-center justify-center rounded-tl-xl rounded-tr-sm border-t border-r border-b-2 border-t-[#b9b9b4] border-r-white border-b-[#dfd6b4] pl-1.5 whitespace-nowrap ${tab.className}`}
          >
            {tab.label}
          </button>
        ))}
        <div className="flex-1 border-b-2 border-[#dfd6b4]" />
      </div>

      <main className="relative min-h-[393px] flex-1 overflow-hidden">
        <Schematic />
        <RecordTimer />
      </main>

      <div className="mt-px h-[18px] shrink-0 bg-[#f0f0f0]">
        <div className="h-[15px] w-[644px] bg-[#cdcdcd]" />
      </div>

      <SheetTabs />
      <div className="h-1 shrink-0 border-b-2 border-[#e3d98f] bg-[#e8e2dc]" />
      <div className="h-[3px] shrink-0" />

      <Messages />

      <div className="flex h-[19px] shrink-0 items-center justify-end gap-3 bg-[#f0f0f0] pt-1 pr-[51px]">
        <span>EMTDC run completed.</span>
        <span>Saved</span>
      </div>

      <div className="relative shrink-0">
        <Taskbar />
        <InputMethodBar />
      </div>
    </div>
  );
}
